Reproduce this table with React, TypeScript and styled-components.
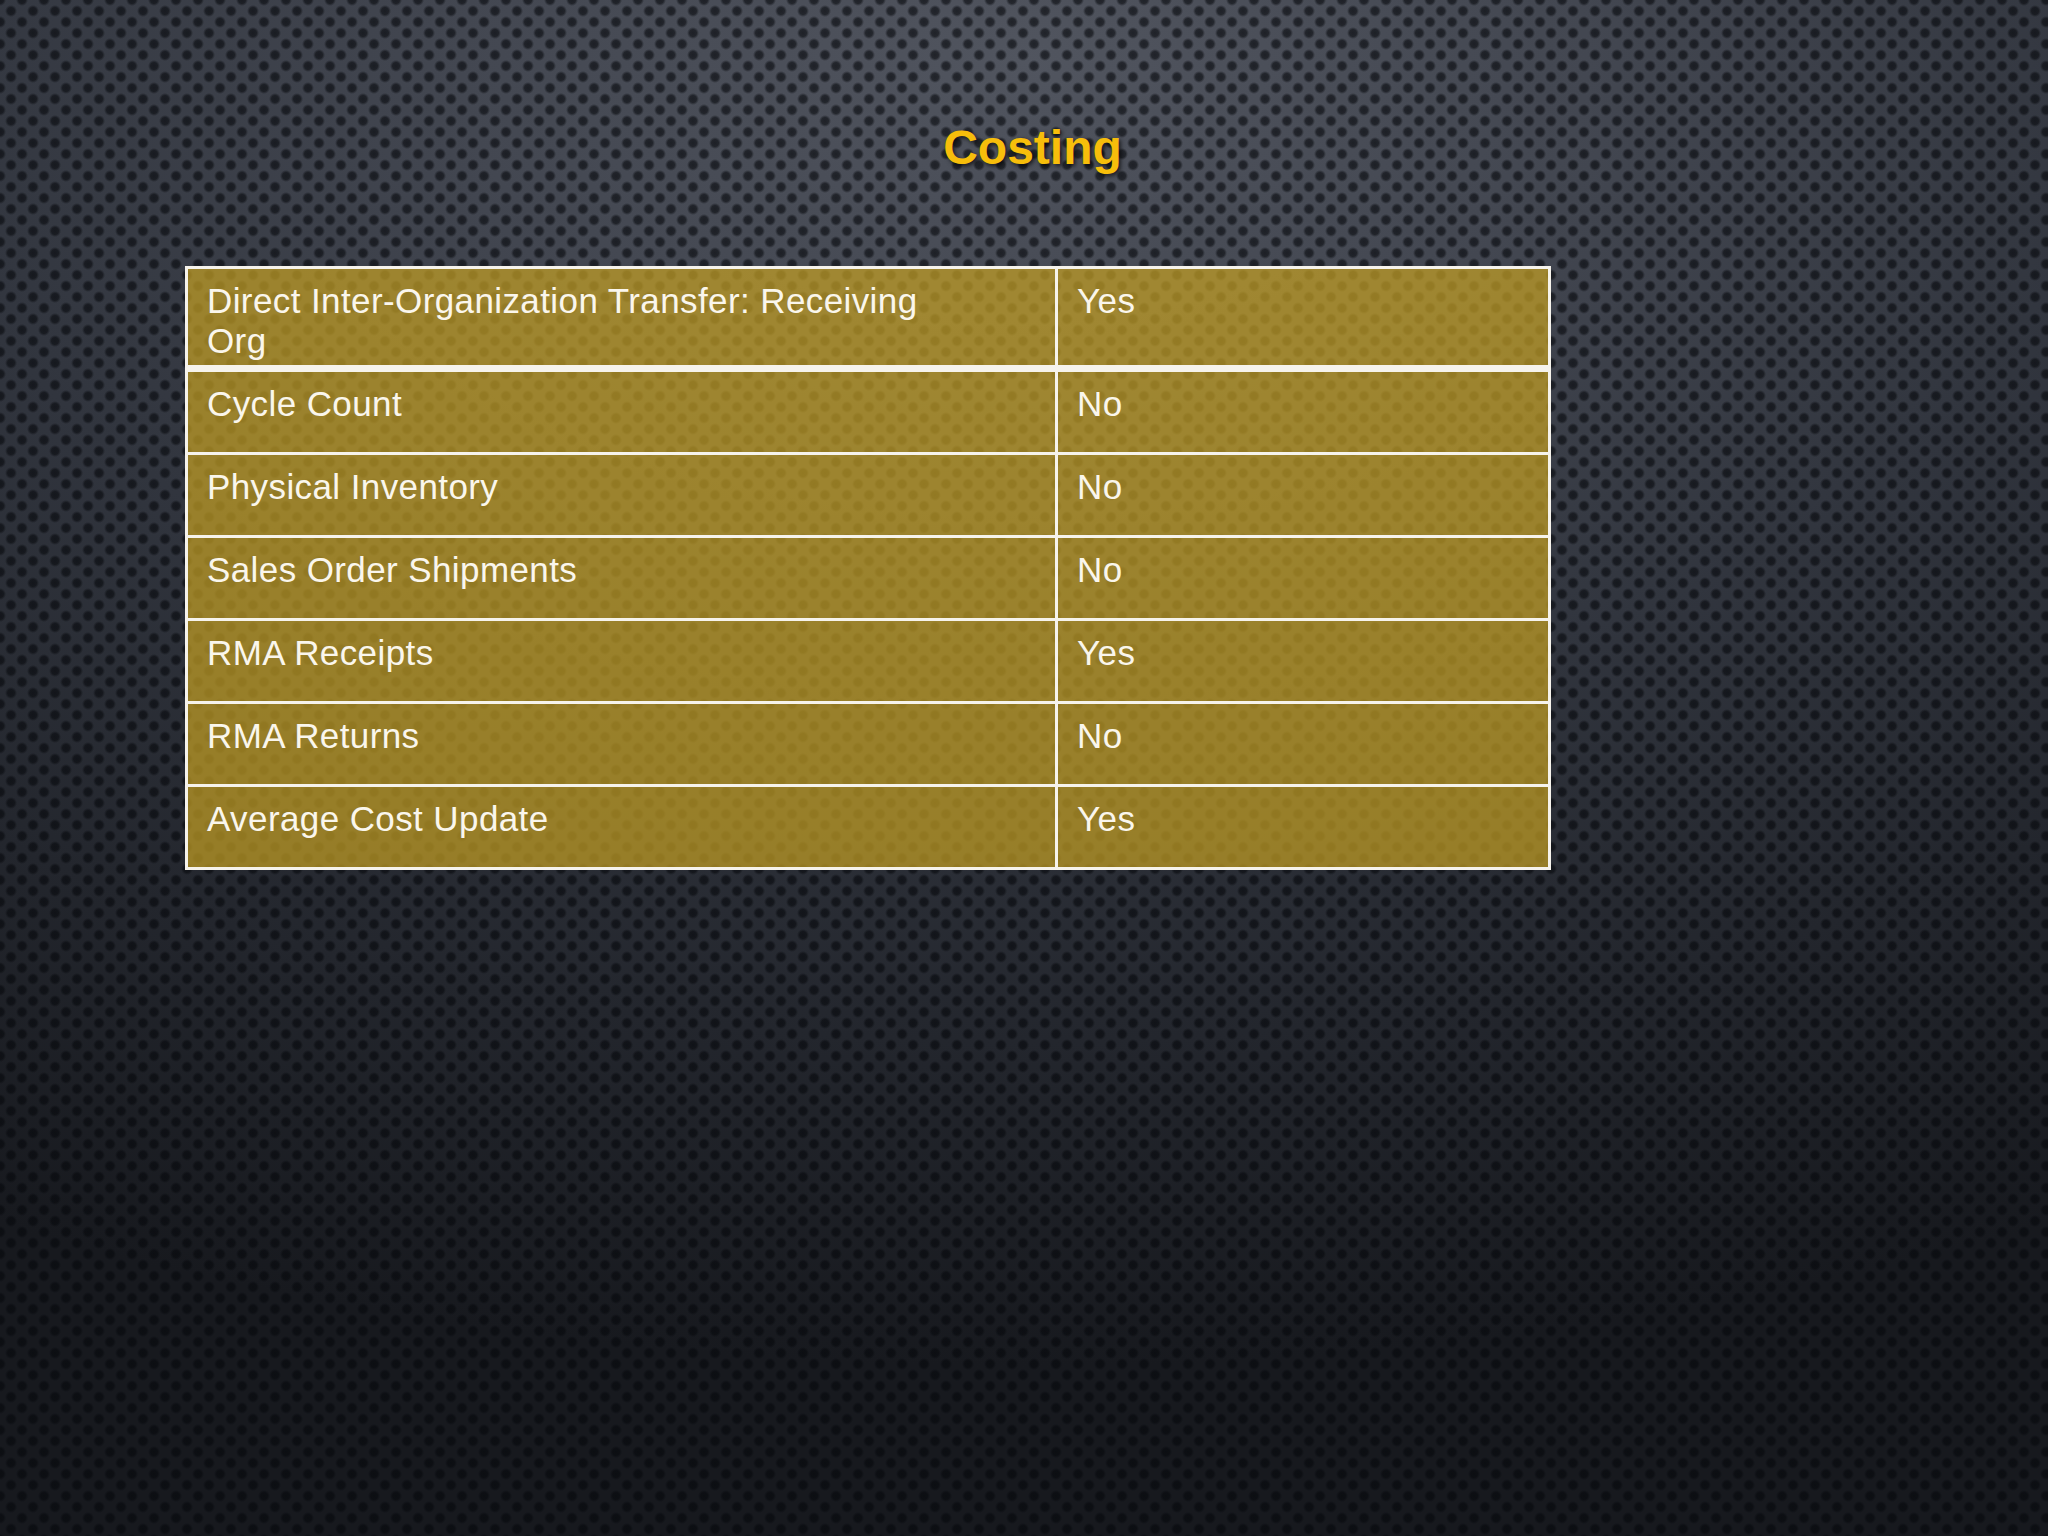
import * as React from 'react';
import styled, { createGlobalStyle } from 'styled-components';

const rows: Array<[string, string]> = [
    ['Direct Inter-Organization Transfer: Receiving\nOrg', 'Yes'],
    ['Cycle Count', 'No'],
    ['Physical Inventory', 'No'],
    ['Sales Order Shipments', 'No'],
    ['RMA Receipts', 'Yes'],
    ['RMA Returns', 'No'],
    ['Average Cost Update', 'Yes'],
];

const lineColor = '#f6f3ec';

const GlobalStyle = createGlobalStyle`
    html, body {
        margin: 0;
        padding: 0;
        background: #16181d;
    }
`;

export default function App() {
    return (
        <>
            <GlobalStyle />
            <Slide>
                <Title>Costing</Title>
                <Table>
                    {rows.map(([label, value], i) => (
                        <Row key={label} $first={i === 0} $afterHeader={i === 1}>
                            <LabelCell>{label}</LabelCell>
                            <Cell>{value}</Cell>
                        </Row>
                    ))}
                </Table>
            </Slide>
        </>
    );
}

const dot = 'radial-gradient(circle, rgba(6, 8, 12, 0.65) 0, rgba(6, 8, 12, 0.58) 3.5px, rgba(6, 8, 12, 0) 6px)';

const Slide = styled('div')`
    position: relative;
    width: 2048px;
    height: 1536px;
    overflow: hidden;
    box-sizing: border-box;
    padding-top: 120px;
    display: flex;
    flex-direction: column;
    font-family: "Liberation Sans", Arial, sans-serif;
    background-color: #16181d;
    background-image:
        ${dot},
        ${dot},
        radial-gradient(ellipse 110% 85% at 50% 4%, #51555f 0%, #434751 25%, #31353e 50%, #23262d 75%, #17191e 100%);
    background-size: 22px 22px, 22px 22px, 100% 100%;
    background-position: 0 0, 11px 11px, 0 0;
`;

const Title = styled('h1')`
    margin: 0;
    padding-left: 17px;
    text-align: center;
    font-size: 48px;
    line-height: 56px;
    font-weight: 700;
    color: #f7be0b;
    text-shadow: 2px 2px 4px rgba(0, 0, 0, 0.7);
`;

const Table = styled('div')`
    margin: 90px 0 0 185px;
    width: 1366px;
    box-sizing: border-box;
    border: 3px solid ${lineColor};
    display: flex;
    flex-direction: column;
`;

const Row = styled('div')<{ $first?: boolean; $afterHeader?: boolean }>`
    display: grid;
    grid-template-columns: 870px 490px;
    height: ${p => (p.$first ? 96 : 80)}px;
    border-top: ${p => (p.$first ? 0 : p.$afterHeader ? 7 : 3)}px solid ${lineColor};
`;

const Cell = styled('div')`
    box-sizing: border-box;
    padding: 12px 19px 0;
    background: rgba(198, 161, 35, 0.7);
    color: #faf6ec;
    font-size: 35px;
    letter-spacing: 0.4px;
    line-height: 40px;
    white-space: pre-line;
`;

const LabelCell = styled(Cell)`
    border-right: 3px solid ${lineColor};
`;
